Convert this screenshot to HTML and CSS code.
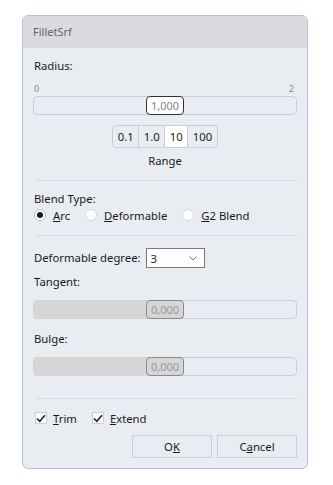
FILE: index.html
```html
<!DOCTYPE html>
<html>
<head>
<meta charset="utf-8">
<link rel="stylesheet" href="styles.css">
</head>
<body>
<div class="dialog">
  <div class="title">FilletSrf</div>
  <div class="content">
    <div class="label radius-label">Radius:</div>
    <div class="scale"><span>0</span><span>2</span></div>
    <div class="slider">
      <div class="thumb">1,000</div>
    </div>
    <div class="range-row">
      <div class="seg">
        <span class="seg-item">0.1</span>
        <span class="seg-item">1.0</span>
        <span class="seg-item active">10</span>
        <span class="seg-item">100</span>
      </div>
    </div>
    <div class="range-label">Range</div>
    <div class="sep"></div>
    <div class="label blend-label">Blend Type:</div>
    <div class="radios">
      <span class="radio-item"><span class="radio checked"></span><span><u>A</u>rc</span></span>
      <span class="radio-item"><span class="radio"></span><span><u>D</u>eformable</span></span>
      <span class="radio-item"><span class="radio"></span><span><u>G</u>2 Blend</span></span>
    </div>
    <div class="sep sep2"></div>
    <div class="degree-row">
      <span class="label">Deformable degree:</span>
      <span class="select"><span>3</span>
        <svg width="8" height="5" viewBox="0 0 8 5"><path d="M0.5 0.5 L4 4 L7.5 0.5" fill="none" stroke="#777" stroke-width="1"/></svg>
      </span>
    </div>
    <div class="label tangent-label">Tangent:</div>
    <div class="slider disabled">
      <div class="fill"></div>
      <div class="thumb">0,000</div>
    </div>
    <div class="label bulge-label">Bulge:</div>
    <div class="slider disabled">
      <div class="fill"></div>
      <div class="thumb">0,000</div>
    </div>
    <div class="sep sep3"></div>
    <div class="checks">
      <span class="check-item"><span class="check"><svg width="10" height="9" viewBox="0 0 10 9"><path d="M1 4.5 L3.8 7.3 L9 1.2" fill="none" stroke="#222" stroke-width="1.6"/></svg></span><span><u>T</u>rim</span></span>
      <span class="check-item"><span class="check"><svg width="10" height="9" viewBox="0 0 10 9"><path d="M1 4.5 L3.8 7.3 L9 1.2" fill="none" stroke="#222" stroke-width="1.6"/></svg></span><span><u>E</u>xtend</span></span>
    </div>
    <div class="buttons">
      <span class="btn">O<u>K</u></span>
      <span class="btn">C<u>a</u>ncel</span>
    </div>
  </div>
</div>
</body>
</html>
```
FILE: styles.css
```css
* { box-sizing: border-box; }
body {
  margin: 0;
  background: #ffffff;
  font-family: "Noto Sans", "Open Sans", sans-serif;
  font-size: 11.3px;
  color: #1a1a1a;
}
.dialog {
  margin: 15px 0 0 22px;
  width: 286px;
  height: 454px;
  border: 1px solid #b4c0d4;
  border-radius: 6px;
  background: #e9ecf1;
  overflow: hidden;
}
.title {
  height: 32px;
  background: #d9dbdf;
  color: #666;
  font-size: 11px;
  line-height: 31px;
  padding-left: 10px;
}
.content {
  padding: 0 10px 0 10px;
  display: flex;
  flex-direction: column;
}
.label { line-height: 16px; padding-left: 1px; }
.radius-label { margin-top: 10px; }
.scale {
  display: flex;
  justify-content: space-between;
  font-size: 9px;
  color: #888;
  line-height: 11px;
  margin-top: 9px;
  padding: 0 3px 0 1px;
}
.slider {
  position: relative;
  height: 19px;
  border: 1px solid #c9ced6;
  border-radius: 4px;
  background: #e9ecf1;
  margin-top: 2px;
}
.thumb {
  position: absolute;
  left: 112px;
  top: -1px;
  width: 38px;
  height: 19px;
  background: #fff;
  border: 1px solid #333;
  border-radius: 4px;
  font-size: 11px;
  color: #888;
  text-align: center;
  line-height: 17px;
}
.slider.disabled .thumb {
  background: #d6d6d6;
  border-color: #8a8a8a;
  color: #999;
}
.slider .fill {
  position: absolute;
  left: -1px;
  top: -1px;
  width: 118px;
  height: 19px;
  background: #d6d6d6;
  border-radius: 4px 0 0 4px;
}
.range-row {
  display: flex;
  justify-content: center;
  margin-top: 10px;
}
.seg {
  display: flex;
  border: 1px solid #c9ced6;
  border-radius: 4px;
  overflow: hidden;
  height: 23px;
}
.seg-item {
  line-height: 21px;
  padding: 0 4.5px;
  color: #1a1a1a;
  border-left: 1px solid #c9ced6;
  min-width: 23px;
  text-align: center;
}
.seg-item:first-child { border-left: none; }
.seg-item.active { background: #fff; }
.range-label {
  text-align: center;
  line-height: 16px;
  margin-top: 5px;
}
.sep {
  height: 1px;
  background: #d6dae1;
  margin: 11px 0 0 2px;
}
.blend-label { margin-top: 10px; }
.radios {
  display: flex;
  align-items: center;
  height: 16px;
  padding-left: 1px;
}
.radio-item {
  display: flex;
  align-items: center;
  gap: 7px;
  margin-right: 15px;
}
.radio {
  width: 12px;
  height: 12px;
  border-radius: 50%;
  background: #fff;
  border: 1px solid #d4d8de;
  display: inline-flex;
  align-items: center;
  justify-content: center;
}
.radio.checked { border-color: #b8bcc4; }
.radio.checked::after {
  content: "";
  width: 6px;
  height: 6px;
  border-radius: 50%;
  background: #1a1a1a;
}
.sep2 { margin-top: 12px; }
.degree-row {
  display: flex;
  align-items: center;
  margin-top: 12px;
  gap: 5px;
}
.select {
  width: 59px;
  height: 20px;
  border: 1px solid #7a7a7a;
  background: #fff;
  display: flex;
  align-items: center;
  justify-content: space-between;
  padding: 0 7px 0 4px;
  color: #1a1a1a;
}
.tangent-label { margin-top: 6px; }
.tangent-label + .slider { margin-top: 10px; }
.bulge-label { margin-top: 12px; }
.bulge-label + .slider { margin-top: 10px; }
.sep3 { margin-top: 22px; }
.checks {
  display: flex;
  align-items: center;
  margin-top: 11px;
  height: 16px;
  padding-left: 2px;
}
.check-item {
  display: flex;
  align-items: center;
  gap: 6px;
  margin-right: 15px;
}
.check {
  width: 12px;
  height: 12px;
  background: #fff;
  border: 1px solid #c9ced6;
  display: inline-flex;
  align-items: center;
  justify-content: center;
}
.buttons {
  display: flex;
  justify-content: flex-end;
  gap: 5px;
  margin-top: 9px;
  padding-right: 0;
}
.btn {
  width: 80px;
  height: 23px;
  border: 1px solid #c9ced6;
  background: #e9ecf1;
  text-align: center;
  line-height: 21px;
}
```
